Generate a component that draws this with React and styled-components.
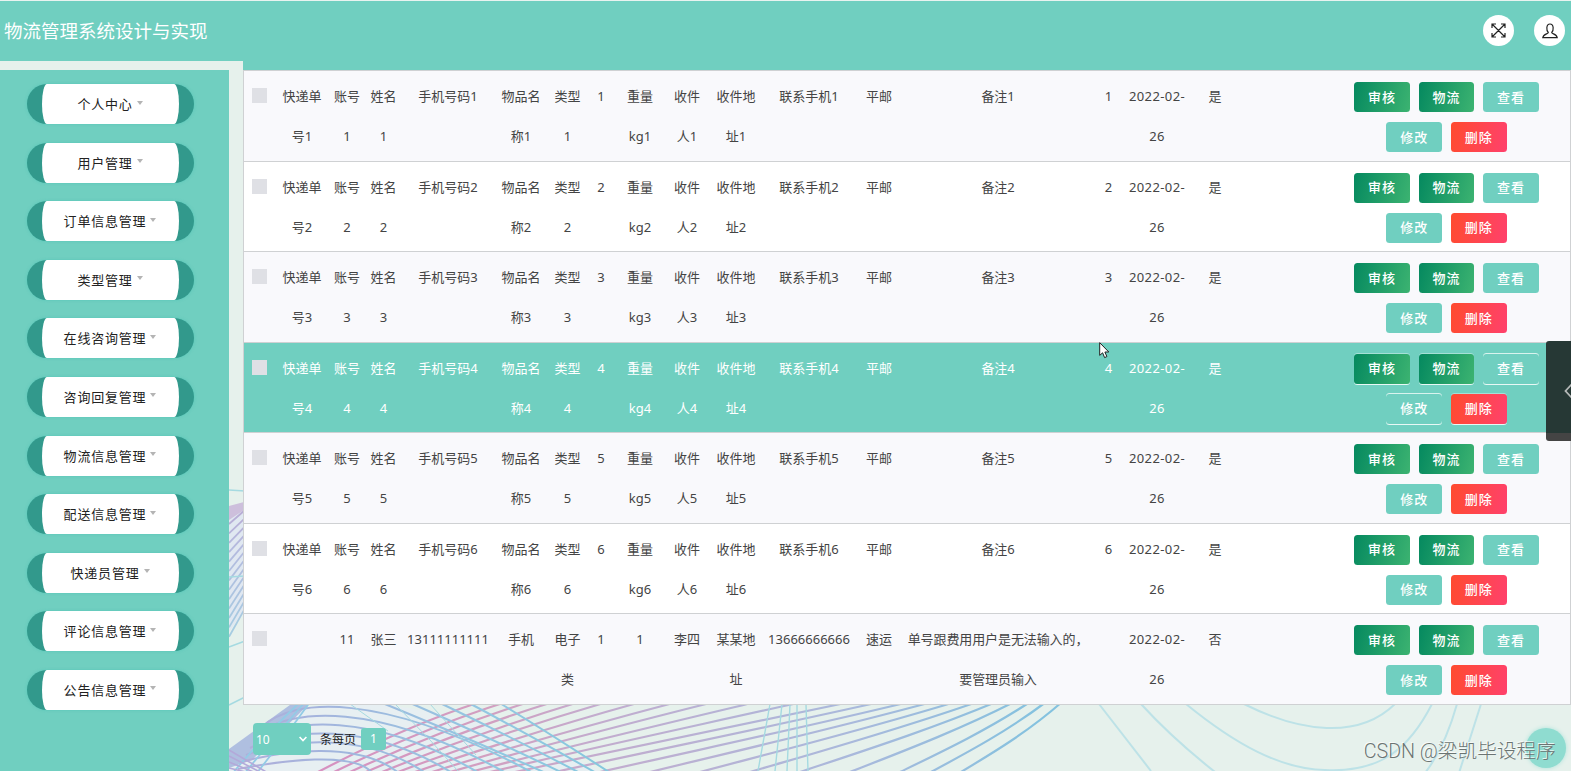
import React from 'react';
import styled, { createGlobalStyle, css } from 'styled-components';

const teal = '#70cfc0';

const GlobalStyle = createGlobalStyle`
  * { box-sizing: border-box; }
  html, body { margin: 0; padding: 0; overflow: hidden; }
  body {
    font-family: "Noto Sans", "Noto Sans CJK SC", sans-serif;
    font-size: 13px;
    color: #444;
    background: #e6f1ec;
  }
`;

const Page = styled.div`
  position: relative;
  width: 1571px;
  height: 771px;
  display: flex;
  flex-direction: column;
  overflow: hidden;
  background: #e6f1ec;
`;

const Header = styled.header`
  flex: none;
  height: 60.5px;
  display: flex;
  justify-content: space-between;
  align-items: center;
  padding: 0 6px 0 4px;
  border-top: 1px solid #e9f3f0;
  background: ${teal};
`;

const Title = styled.h1`
  margin: 0;
  padding-top: 1px;
  font-size: 18.5px;
  font-weight: 400;
  line-height: 58px;
  color: #fff;
`;

const HeaderIcons = styled.div`
  display: flex;
  gap: 20px;
`;

const RoundButton = styled.button`
  width: 31px;
  height: 31px;
  padding: 0;
  border: 0;
  border-radius: 50%;
  background: #fff;
  display: flex;
  align-items: center;
  justify-content: center;
`;

const Body = styled.div`
  flex: 1;
  display: flex;
  align-items: stretch;
  min-height: 0;
`;

const Sidebar = styled.nav`
  flex: none;
  width: 229px;
  margin-top: 9px;
  padding: 14.5px 0 0 27px;
  display: flex;
  flex-direction: column;
  gap: 18.6px;
  background: ${teal};
`;

const MenuShell = styled.div`
  flex: none;
  width: 166.5px;
  height: 40px;
  padding: 0 14.5px 0 15px;
  border-radius: 20px;
  background: #32998c;
  box-shadow: 0 0 3px rgba(60, 190, 175, 0.5);
`;

const MenuLabel = styled.div`
  height: 40px;
  padding: 0 1px 1px 0;
  display: flex;
  align-items: center;
  justify-content: center;
  border-radius: 5px / 20px;
  background: #fff;
  color: #222;
  letter-spacing: 0.8px;
`;

const Caret = styled.i`
  margin: -2px 0 0 4px;
  border: 3.5px solid transparent;
  border-width: 4px 3.5px 0;
  border-top-color: #b4b4b4;
`;

const Main = styled.main`
  flex: 1;
  min-width: 0;
  margin-left: 14px;
  display: flex;
  flex-direction: column;
`;

const HeaderTail = styled.div`
  flex: none;
  height: 9.5px;
  background: ${teal};
`;

const Table = styled.div`
  flex: none;
  width: 1328px;
  border: 1px solid #cfd1d3;
  border-bottom: 0;
`;

const Row = styled.div`
  display: grid;
  grid-template-columns: 31px 54px 36px 37px 92px 54px 39px 28px 50px 44px 54px 92px 48px 190px 31px 66px 50px 83px 247px;
  height: 90.5px;
  padding-top: 5px;
  border-bottom: 1px solid #cfd1d3;
  background: ${(p) => (p.$active ? teal : p.$odd ? '#f9f9fc' : '#fff')};
  color: ${(p) => (p.$active ? '#fff' : '#444')};
`;

const Cell = styled.div`
  text-align: center;
  white-space: pre;
  line-height: 40px;
  letter-spacing: ${(p) => p.$spacing || 0};
`;

const Checkbox = styled.span`
  display: block;
  width: 15px;
  height: 15px;
  margin: 12px auto 0 8px;
  background: #dfe0e5;
`;

const Actions = styled.div`
  display: flex;
  flex-wrap: wrap;
  justify-content: center;
  align-content: flex-start;
  gap: 10px 9px;
  padding: 6px 28px 0;
`;

const tones = {
  green: css`background: linear-gradient(105deg, #05895f, #3cb371);`,
  teal: css`background: ${teal};`,
  red: css`background: linear-gradient(100deg, #ff4b2f, #ff416c);`,
};

const ActionButton = styled.button`
  width: 55.6px;
  height: 30.2px;
  padding: 0;
  border: 0;
  border-radius: 3.5px;
  font: inherit;
  font-weight: 500;
  line-height: 29px;
  letter-spacing: 1px;
  color: #fff;
  ${(p) => tones[p.$tone]}
  ${(p) => p.$outlined && css`box-shadow: 0 1px 0 #e8f8f5, 0 -1px 0 ${p.$tone === 'teal' ? '#d9f3ee' : '#a5e0d6'};`}
`;

const Pager = styled.div`
  display: flex;
  align-items: center;
  height: 32px;
  margin: 18.5px 0 0 9.5px;
  font-size: 12px;
  color: #222;
`;

const PageSize = styled.div`
  width: 58.5px;
  height: 32px;
  padding: 0 4.5px 0 3.5px;
  display: flex;
  align-items: center;
  justify-content: space-between;
  border-radius: 4px;
  background: ${teal};
  color: #fff;
`;

const PagerText = styled.span`
  margin: 0 5px 0 9px;
`;

const PageNumber = styled.span`
  width: 25px;
  height: 22px;
  line-height: 22px;
  border-radius: 3px;
  text-align: center;
  background: ${teal};
  color: #fff;
`;

const Waves = styled.svg`
  position: absolute;
  left: 0;
  top: 0;
`;

const Foreground = styled.div`
  position: relative;
  height: 771px;
  display: flex;
  flex-direction: column;
`;

const DrawerTab = styled.div`
  position: absolute;
  right: 0;
  top: 341px;
  width: 25px;
  height: 100px;
  border-radius: 3px 0 0 3px;
  background: linear-gradient(#263835 92%, #444 92%);
  display: flex;
  align-items: center;
  justify-content: flex-end;
`;

const FloatingDot = styled.div`
  position: absolute;
  right: 5px;
  bottom: 3px;
  width: 40px;
  height: 40px;
  border-radius: 50%;
  background: #8fdcd0;
  box-shadow: 0 0 4px #a9e3da;
`;

const Watermark = styled.div`
  position: absolute;
  right: 15px;
  bottom: 5px;
  font-family: Roboto, "Noto Sans CJK SC", sans-serif;
  font-size: 19.7px;
  font-weight: 300;
  line-height: 28px;
  white-space: nowrap;
  color: #6b7472;
  text-shadow: -1px -1px 0 rgba(255, 255, 255, 0.75);
`;

const Cursor = styled.svg`
  position: absolute;
  left: 1099px;
  top: 342px;
`;

const menu = ['个人中心', '用户管理', '订单信息管理', '类型管理', '在线咨询管理', '咨询回复管理', '物流信息管理', '配送信息管理', '快递员管理', '评论信息管理', '公告信息管理'];

const sample = (n) => [
  `快递单\n号${n}`, `账号\n${n}`, `姓名\n${n}`, `手机号码${n}`, `物品名\n称${n}`, `类型\n${n}`, `${n}`, `重量\nkg${n}`,
  `收件\n人${n}`, `收件地\n址${n}`, `联系手机${n}`, '平邮', `备注${n}`, `${n}`, '2022-02-\n26', '是', '',
];

const rows = [
  ...[1, 2, 3, 4, 5, 6].map(sample),
  ['', '11', '张三', '13111111111', '手机', '电子\n类', '1', '1', '李四', '某某地\n址', '13666666666', '速运',
    '单号跟费用用户是无法输入的，\n要管理员输入', '', '2022-02-\n26', '否', ''],
];

const actions = [['审核', 'green'], ['物流', 'green'], ['查看', 'teal'], ['修改', 'teal'], ['删除', 'red']];
const DATE_COLUMN = 14;
const REMARK_COLUMN = 12;
const spacingFor = (c) => (c === DATE_COLUMN ? '0.4px' : c === REMARK_COLUMN ? '-0.1px' : undefined);

const range = (n) => Array.from({ length: n }, (_, i) => i);

// Each rising strand runs from [x at the page bottom] to [x at the table's lower edge].
const rising = [
  [318, 480], [334, 506], [350, 529], [366, 553], [382, 579], [398, 607], [415, 641], [432, 677],
  [450, 714], [470, 756], [490, 802], [515, 850], [555, 880], [600, 909], [650, 932], [700, 955],
  [750, 977], [800, 996], [850, 1014], [900, 1030], [931, 1046], [961, 1062],
];

const risingPath = ([s, t], i) => {
  const k = i / (rising.length - 1);
  const dx = t - s;
  return `M${s} 772 C${s + dx * 0.33} ${744 + k * 8} ${s + dx * 0.66} ${720 + k * 12} ${t} 702`;
};

function Background() {
  return (
    <Waves width="1571" height="771" viewBox="0 0 1571 771" fill="none">
      <defs>
        <linearGradient id="sweep" gradientUnits="userSpaceOnUse" x1="300" y1="0" x2="1040" y2="0">
          <stop offset="0" stopColor="#d78fc0" />
          <stop offset="0.25" stopColor="#d29fc0" />
          <stop offset="0.4" stopColor="#c3acce" />
          <stop offset="0.75" stopColor="#a9b9dc" />
          <stop offset="1" stopColor="#84c2df" />
        </linearGradient>
        <linearGradient id="fall" gradientUnits="userSpaceOnUse" x1="229" y1="0" x2="600" y2="0">
          <stop offset="0" stopColor="#b3add9" />
          <stop offset="0.25" stopColor="#a3b4dd" />
          <stop offset="0.7" stopColor="#92c8e2" />
          <stop offset="1" stopColor="#86c8de" />
        </linearGradient>
        <linearGradient id="strip" gradientUnits="userSpaceOnUse" x1="0" y1="503" x2="0" y2="650">
          <stop offset="0" stopColor="#b9a8d2" />
          <stop offset="0.3" stopColor="#b4bade" />
          <stop offset="1" stopColor="#a3d0e2" />
        </linearGradient>
      </defs>
      <path d="M229 506 L244 502 V520 L229 535Z" fill="#cdbfdc" />
      <path d="M229 520 L244 510 V610 L229 632Z" fill="#e0e8f1" />
      <path d="M229 758 C270 715 310 700 370 704 C460 710 540 740 600 771 H229Z" fill="#e7eff2" />
      <path d="M229 749 L294 702 H311 L252 760 L229 768Z" fill="#afbfe0" />
      <g stroke="url(#sweep)" strokeWidth="2.2">
        {rising.map((strand, i) => (
          <path key={i} d={risingPath(strand, i)} />
        ))}
      </g>
      <g stroke="url(#fall)" strokeWidth="2">
        {range(7).map((i) => (
          <path key={i} d={`M${262 - i * 4} ${727 + i * 7} C${292 - i * 2} ${698 + i * 10.5} ${380 - i * 4} ${690 + i * 10} ${535 - i * 27} 774`} />
        ))}
        {[[380, 548], [408, 565], [438, 582], [467, 598], [498, 612]].map(([t, s], i) => (
          <path key={i} d={`M${t} 702 Q${(t + s) / 2 - 3} ${735} ${s} 774`} />
        ))}
      </g>
      <g stroke="#93cbe6" strokeWidth="1.8">
        {range(3).map((i) => (
          <path key={i} d={`M${232 + i * 12} 774 Q${262 + i * 9} ${738 + i * 3} ${300 + i * 5} 702`} />
        ))}
      </g>
      <g stroke="#b3a9d9" strokeWidth="1.6">
        {range(4).map((i) => (
          <path key={i} d={`M229 ${750 + i * 6} L${268 - i * 6} 773`} />
        ))}
      </g>
      <g stroke="url(#strip)" strokeWidth="1.8">
        {range(13).map((i) => (
          <path key={i} d={`M229 ${524 + i * 9.4} L245 ${510 + i * 8.2}`} />
        ))}
      </g>
      <g stroke="#a5dae1" strokeWidth="1.4">
        <path d="M229 490 L245 491 M229 577 L245 576 M229 647 L245 641 M229 705 L245 697" />
        <path d="M770 704 L758 771 M782 704 L775 771 M790 704 L787 771 M797 704 V771 M806 704 L808 771" />
        <path d="M350 704 L388 731 M395 704 L430 740 L458 771 M430 704 L476 755" strokeWidth="1" />
      </g>
      <g stroke="#bde2e7" strokeWidth="2">
        <path d="M1099 704 L1151 771" />
        <path d="M1141 704 Q1172 738 1215 772" />
        <path d="M1186 704 C1235 744 1280 769 1325 770 C1382 773 1410 747 1432 704" />
        <path d="M1244 704 C1300 732 1358 740 1395 704" />
        <path d="M1457 704 Q1445 747 1425 773 M1481 704 L1459 773" />
      </g>
    </Waves>
  );
}

export default function App() {
  return (
    <Page>
      <GlobalStyle />
      <Background />
      <Foreground>
        <Header>
          <Title>物流管理系统设计与实现</Title>
          <HeaderIcons>
            <RoundButton aria-label="全屏">
              <svg width="15" height="15" viewBox="0 0 15 15" fill="none" stroke="#222" strokeWidth="1.2">
                <path d="M1 5V1H5M10 1H14V5M14 10V14H10M5 14H1V10M1 1L14 14M14 1L1 14" />
              </svg>
            </RoundButton>
            <RoundButton aria-label="用户">
              <svg width="16" height="16" viewBox="0 0 16 16" fill="none" stroke="#222" strokeWidth="1.2">
                <path d="M6.3 9.5C4.2 7.5 4 1 8 1S11.8 7.5 9.7 9.5C9.8 11.2 14.6 10.6 15.2 14.7H.8C1.4 10.6 6.2 11.2 6.3 9.5Z" />
              </svg>
            </RoundButton>
          </HeaderIcons>
        </Header>
        <Body>
          <Sidebar>
            {menu.map((item) => (
              <MenuShell key={item}>
                <MenuLabel>{item}<Caret /></MenuLabel>
              </MenuShell>
            ))}
          </Sidebar>
          <Main>
            <HeaderTail />
            <Table>
              {rows.map((cells, r) => (
                <Row key={r} $odd={r % 2 === 0} $active={r === 3}>
                  <Checkbox />
                  {cells.map((text, c) => (
                    <Cell key={c} $spacing={spacingFor(c)}>{text}</Cell>
                  ))}
                  <Actions>
                    {actions.map(([label, tone]) => (
                      <ActionButton key={label} $tone={tone} $outlined={r === 3}>{label}</ActionButton>
                    ))}
                  </Actions>
                </Row>
              ))}
            </Table>
            <Pager>
              <PageSize>
                10
                <svg width="8" height="6" viewBox="0 0 8 6" fill="none" stroke="#fff" strokeWidth="1.6">
                  <path d="M.6 1L4 4.6L7.4 1" />
                </svg>
              </PageSize>
              <PagerText>条每页</PagerText>
              <PageNumber>1</PageNumber>
            </Pager>
          </Main>
        </Body>
      </Foreground>
      <DrawerTab>
        <svg width="7" height="16" viewBox="0 0 7 16" fill="none" stroke="#b5b9b8" strokeWidth="1.8">
          <path d="M7.5 1.5L1.5 8L7.5 14.5" />
        </svg>
      </DrawerTab>
      <FloatingDot />
      <Watermark>CSDN @梁凯毕设程序</Watermark>
      <Cursor width="12" height="18" viewBox="0 0 12 18">
        <path d="M.7.7V13.4L3.6 10.8L5.6 15.6L7.9 14.6L5.9 10H9.8Z" fill="#fff" stroke="#222" strokeWidth="1" />
      </Cursor>
    </Page>
  );
}
